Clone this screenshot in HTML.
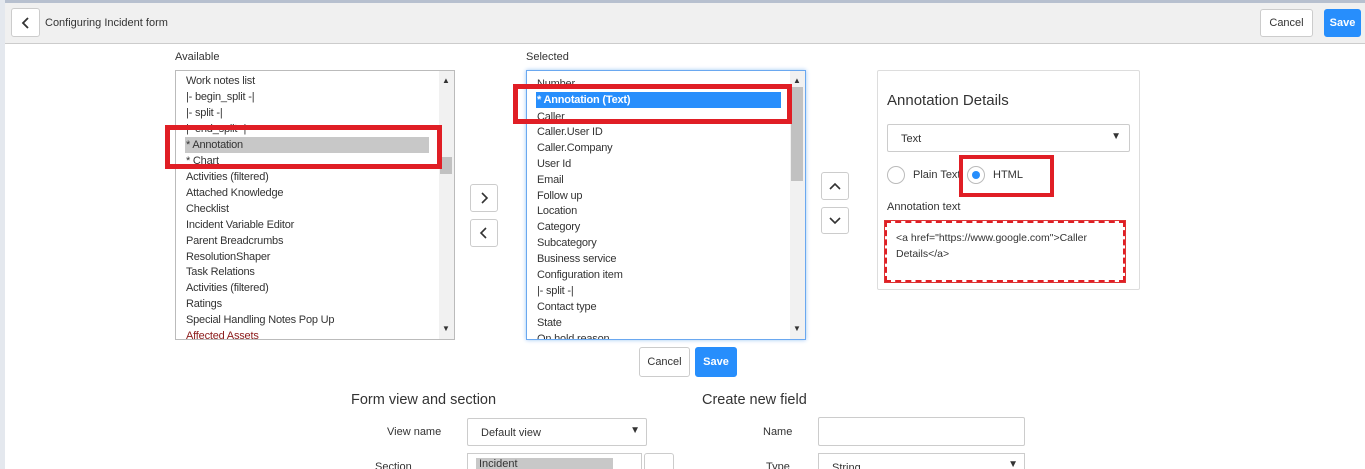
<!DOCTYPE html>
<html><head><meta charset="utf-8"><style>
*{box-sizing:border-box;margin:0;padding:0}
html{overflow:hidden;width:1365px;height:469px}
body{width:1365px;height:469px;overflow:hidden;background:#fff;font-family:"Liberation Sans",sans-serif;font-size:11px;color:#333;position:relative}
.a{position:absolute}
.btn{position:absolute;border:1px solid #ccc;border-radius:3px;background:#fff;display:flex;align-items:center;justify-content:center;font-size:11px;color:#333}
.list{position:absolute;border:1px solid #bbb;background:#fff;overflow:hidden}
.it{position:absolute;left:10px;line-height:16px;white-space:nowrap;letter-spacing:-0.2px}
.red{position:absolute;border:5px solid #e01e25}
.sb{position:absolute;background:#f1f1f1}
.th{position:absolute;background:#c1c1c1}
</style></head><body>
<div class="a" style="left:0;top:0;width:1365px;height:3px;background:#b7c0cf"></div>
<div class="a" style="left:0;top:0;width:5px;height:469px;background:#e4e8ee"></div>
<div class="a" style="left:5px;top:3px;width:1360px;height:41px;background:#f0f0f0;border-bottom:1px solid #ccc"></div>
<div class="btn" style="left:11px;top:8px;width:29px;height:29px"><svg width="12" height="14" viewBox="0 0 12 14"><path d="M8 2 L3 7 L8 12" stroke="#333" stroke-width="1.8" fill="none"/></svg></div>
<div class="a" style="left:45px;top:17px;font-size:11px;color:#333">Configuring Incident form</div>
<div class="btn" style="left:1260px;top:9px;width:53px;height:28px">Cancel</div>
<div class="btn" style="left:1324px;top:9px;width:37px;height:28px;background:#278efc;border-color:#278efc;color:#fff;font-weight:bold">Save</div>

<div class="a" style="left:175px;top:51px">Available</div>
<div class="list" style="left:175px;top:70px;width:280px;height:270px">
<div class="a" style="left:9px;top:66px;width:244px;height:16px;background:#c8c8c8"></div>
<div class="sb" style="left:263px;top:0;width:15px;height:268px"></div>
<div class="th" style="left:264px;top:86px;width:12px;height:17px"></div>
<div class="a" style="left:266px;top:5px;font-size:8px">▲</div>
<div class="a" style="left:266px;top:253px;font-size:8px">▼</div>
<div class="it" style="top:2px">Work notes list</div>
<div class="it" style="top:18px">|- begin_split -|</div>
<div class="it" style="top:34px">|- split -|</div>
<div class="it" style="top:50px">|- end_split -|</div>
<div class="it" style="top:66px">* Annotation</div>
<div class="it" style="top:82px">* Chart</div>
<div class="it" style="top:98px">Activities (filtered)</div>
<div class="it" style="top:114px">Attached Knowledge</div>
<div class="it" style="top:130px">Checklist</div>
<div class="it" style="top:146px">Incident Variable Editor</div>
<div class="it" style="top:162px">Parent Breadcrumbs</div>
<div class="it" style="top:178px">ResolutionShaper</div>
<div class="it" style="top:193px">Task Relations</div>
<div class="it" style="top:209px">Activities (filtered)</div>
<div class="it" style="top:225px">Ratings</div>
<div class="it" style="top:241px">Special Handling Notes Pop Up</div>
<div class="it" style="top:257px;color:#8b1a1a">Affected Assets</div>
</div>
<div class="red" style="left:165px;top:125px;width:277px;height:44px"></div>

<div class="btn" style="left:470px;top:184px;width:28px;height:28px"><svg width="10" height="14"><path d="M3 2 L8 7 L3 12" stroke="#333" stroke-width="1.6" fill="none"/></svg></div>
<div class="btn" style="left:470px;top:219px;width:28px;height:28px"><svg width="10" height="14"><path d="M7 2 L2 7 L7 12" stroke="#333" stroke-width="1.6" fill="none"/></svg></div>

<div class="a" style="left:526px;top:51px">Selected</div>
<div class="list" style="left:526px;top:70px;width:280px;height:270px;border-color:#6aa8f0;box-shadow:0 0 4px #9cc5f5">
<div class="a" style="left:9px;top:21px;width:245px;height:16px;background:#278efc"></div>
<div class="sb" style="left:263px;top:0;width:15px;height:268px"></div>
<div class="th" style="left:264px;top:16px;width:12px;height:94px"></div>
<div class="a" style="left:266px;top:5px;font-size:8px">▲</div>
<div class="a" style="left:266px;top:253px;font-size:8px">▼</div>
<div class="it" style="top:5px">Number</div>
<div class="it" style="top:21px;color:#fff;font-weight:bold">* Annotation (Text)</div>
<div class="it" style="top:38px">Caller</div>
<div class="it" style="top:53px">Caller.User ID</div>
<div class="it" style="top:69px">Caller.Company</div>
<div class="it" style="top:85px">User Id</div>
<div class="it" style="top:101px">Email</div>
<div class="it" style="top:117px">Follow up</div>
<div class="it" style="top:132px">Location</div>
<div class="it" style="top:148px">Category</div>
<div class="it" style="top:164px">Subcategory</div>
<div class="it" style="top:180px">Business service</div>
<div class="it" style="top:196px">Configuration item</div>
<div class="it" style="top:212px">|- split -|</div>
<div class="it" style="top:228px">Contact type</div>
<div class="it" style="top:244px">State</div>
<div class="it" style="top:260px">On hold reason</div>
</div>
<div class="red" style="left:513px;top:84px;width:279px;height:40px"></div>

<div class="btn" style="left:821px;top:172px;width:28px;height:28px"><svg width="14" height="10"><path d="M2 8 L7 3 L12 8" stroke="#333" stroke-width="1.6" fill="none"/></svg></div>
<div class="btn" style="left:821px;top:207px;width:28px;height:27px"><svg width="14" height="10"><path d="M2 2 L7 7 L12 2" stroke="#333" stroke-width="1.6" fill="none"/></svg></div>

<div class="a" style="left:877px;top:70px;width:263px;height:220px;border:1px solid #ddd;border-radius:2px"></div>
<div class="a" style="left:887px;top:92px;font-size:15px;color:#333">Annotation Details</div>
<div class="a" style="left:887px;top:124px;width:243px;height:28px;border:1px solid #ccc;border-radius:2px"><span class="a" style="left:13px;top:8px">Text</span><span class="a" style="right:8px;top:6px;font-size:10px">▼</span></div>
<div class="a" style="left:887px;top:166px;width:18px;height:18px;border:1px solid #bbb;border-radius:50%"></div>
<div class="a" style="left:913px;top:169px">Plain Text</div>
<div class="a" style="left:967px;top:166px;width:18px;height:18px;border:1px solid #bbb;border-radius:50%;background:#fff"><div class="a" style="left:4px;top:4px;width:8px;height:8px;border-radius:50%;background:#278efc"></div></div>
<div class="a" style="left:993px;top:169px">HTML</div>
<div class="red" style="left:959px;top:155px;width:95px;height:42px;border-width:4px"></div>
<div class="a" style="left:887px;top:201px">Annotation text</div>
<div class="a" style="left:885px;top:221px;width:240px;height:61px;border:2px dashed #e01e25;outline:1px solid #d33;background:#fff"></div>
<div class="a" style="left:896px;top:230px;line-height:16px;font-size:10.5px">&lt;a href="https://www.google.com"&gt;Caller<br>Details&lt;/a&gt;</div>

<div class="btn" style="left:639px;top:347px;width:51px;height:30px">Cancel</div>
<div class="btn" style="left:695px;top:347px;width:42px;height:30px;background:#278efc;border-color:#278efc;color:#fff;font-weight:bold">Save</div>

<div class="a" style="left:351px;top:392px;font-size:14.5px">Form view and section</div>
<div class="a" style="left:702px;top:392px;font-size:14.5px">Create new field</div>
<div class="a" style="left:387px;top:426px">View name</div>
<div class="a" style="left:467px;top:418px;width:180px;height:28px;border:1px solid #ccc;border-radius:2px"><span class="a" style="left:13px;top:8px">Default view</span><span class="a" style="right:6px;top:6px;font-size:10px">▼</span></div>
<div class="a" style="left:763px;top:426px">Name</div>
<div class="a" style="left:818px;top:417px;width:207px;height:29px;border:1px solid #ccc;border-radius:2px"></div>
<div class="a" style="left:375px;top:461px">Section</div>
<div class="a" style="left:467px;top:453px;width:175px;height:30px;border:1px solid #ccc"><div class="a" style="left:8px;top:4px;width:137px;height:14px;background:#c8c8c8;padding-left:3px;font-size:11px">Incident</div></div>
<div class="btn" style="left:644px;top:453px;width:30px;height:30px"></div>
<div class="a" style="left:766px;top:461px">Type</div>
<div class="a" style="left:818px;top:453px;width:207px;height:30px;border:1px solid #ccc"><span class="a" style="left:13px;top:8px">String</span><span class="a" style="right:6px;top:5px;font-size:10px">▼</span></div>
</body></html>
